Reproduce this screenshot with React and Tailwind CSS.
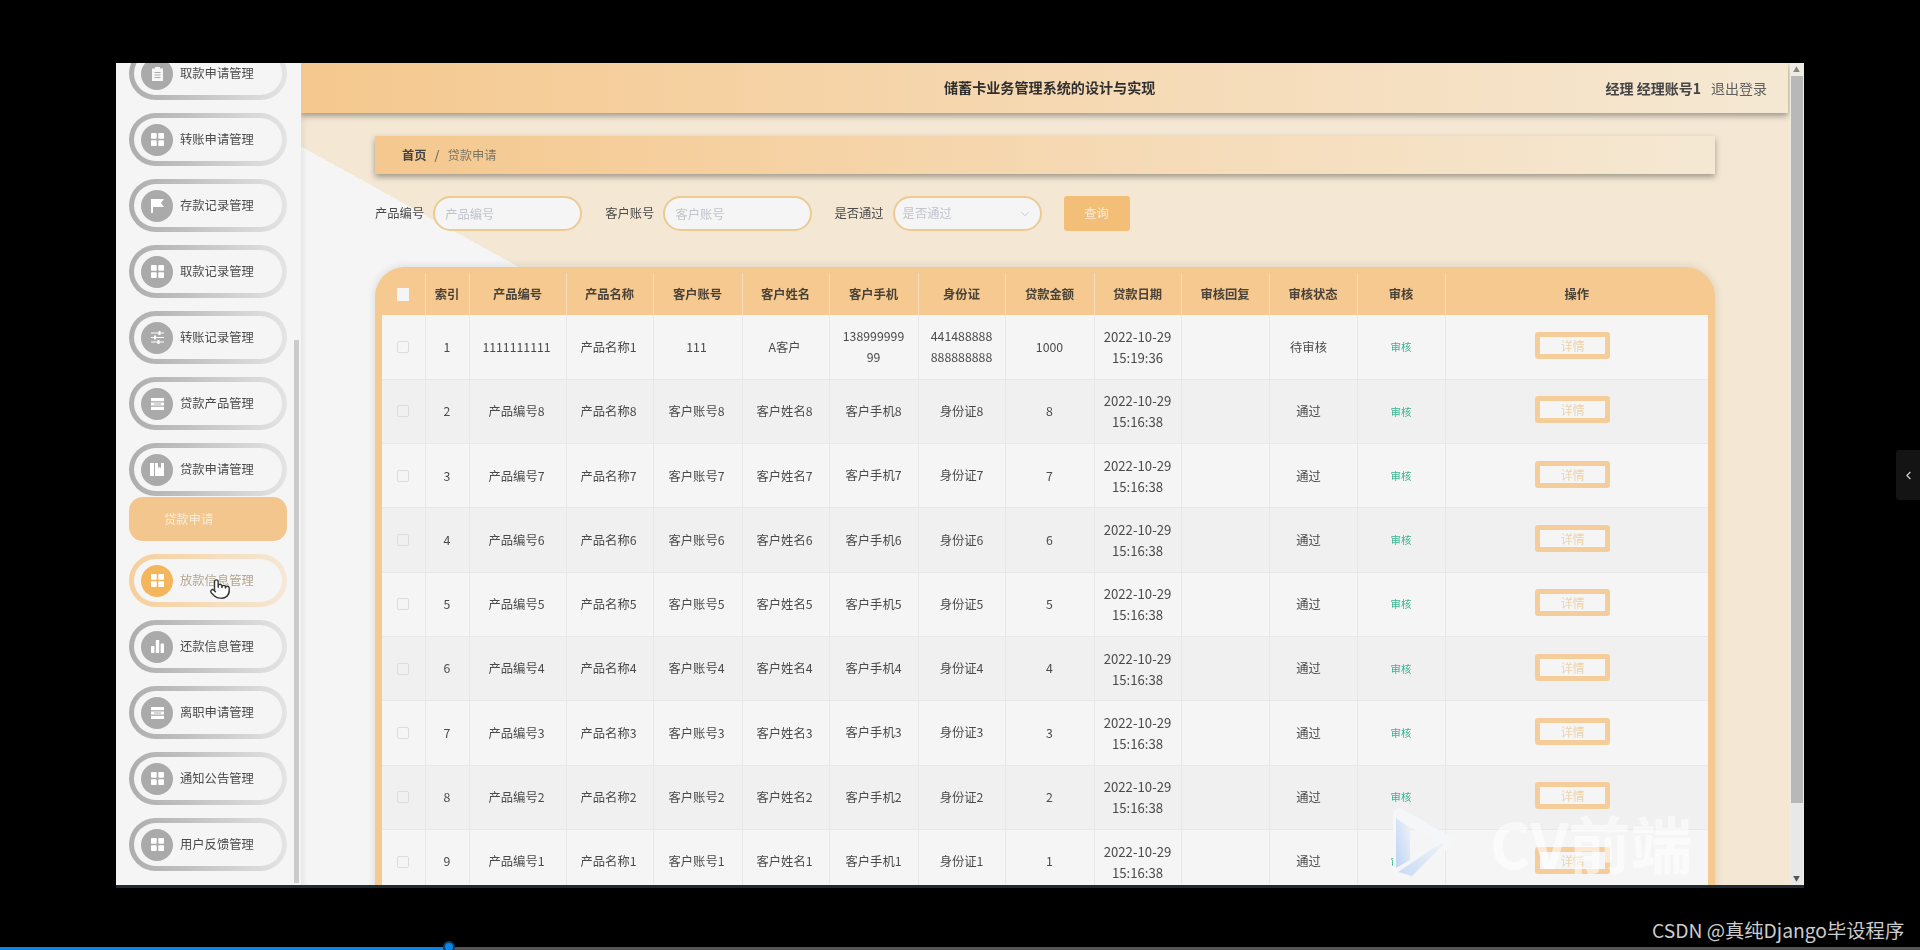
import { ChevronDown, ChevronLeft, Pointer } from "lucide-react";

const IconoGrid = () => (
  <svg width="13" height="13" viewBox="0 0 13 13" fill="#fff">
    <rect x="0" y="0" width="5.7" height="5.7" rx="0.8" />
    <rect x="7.3" y="0" width="5.7" height="5.7" rx="0.8" />
    <rect x="0" y="7.3" width="5.7" height="5.7" rx="0.8" />
    <rect x="7.3" y="7.3" width="5.7" height="5.7" rx="0.8" />
  </svg>
);

const IconoClip = () => (
  <svg width="13" height="14" viewBox="0 0 13 14" fill="#fff">
    <path d="M4 0h5v1.5h3V14H1V1.5h3z" opacity="0.9" />
    <rect x="3.5" y="5" width="6" height="1" fill="#aaa" />
    <rect x="3.5" y="7.5" width="6" height="1" fill="#aaa" />
    <rect x="3.5" y="10" width="6" height="1" fill="#aaa" />
  </svg>
);

const IconoFlag = () => (
  <svg width="13" height="14" viewBox="0 0 13 14" fill="#fff">
    <path d="M0 0h13l-3 4 3 4H2v6H0z" />
  </svg>
);

const IconoSliders = () => (
  <svg width="13" height="13" viewBox="0 0 13 13" fill="#fff">
    <rect x="0" y="1.5" width="13" height="1" />
    <rect x="0" y="6" width="13" height="1" />
    <rect x="0" y="10.5" width="13" height="1" />
    <rect x="7.5" y="0" width="2" height="4" />
    <rect x="3" y="4.5" width="2" height="4" />
    <rect x="6.5" y="9" width="2" height="4" />
  </svg>
);

const IconoFilas = () => (
  <svg width="13" height="12" viewBox="0 0 13 12" fill="#fff">
    <rect x="0" y="0" width="13" height="3.2" />
    <path d="M0 4.4h13v3.2H0zM3 5.4v1.2h7V5.4z" fillRule="evenodd" />
    <rect x="0" y="8.8" width="13" height="3.2" />
  </svg>
);

const IconoLibro = () => (
  <svg width="14" height="13" viewBox="0 0 14 13" fill="#fff">
    <rect x="0" y="0" width="4" height="13" />
    <path d="M5 0h3v5l1.5-1L11 5V0h3v13H5z" />
  </svg>
);

const IconoBarras = () => (
  <svg width="13" height="13" viewBox="0 0 13 13" fill="#fff">
    <rect x="0" y="6" width="3.4" height="7" rx="0.5" />
    <rect x="4.8" y="0" width="3.4" height="13" rx="0.5" />
    <rect x="9.6" y="3.5" width="3.4" height="9.5" rx="0.5" />
  </svg>
);

const menu = [
  { nombre: "取款申请管理", icono: <IconoClip /> },
  { nombre: "转账申请管理", icono: <IconoGrid /> },
  { nombre: "存款记录管理", icono: <IconoFlag /> },
  { nombre: "取款记录管理", icono: <IconoGrid /> },
  { nombre: "转账记录管理", icono: <IconoSliders /> },
  { nombre: "贷款产品管理", icono: <IconoFilas /> },
  { nombre: "贷款申请管理", icono: <IconoLibro />, sub: "贷款申请" },
  { nombre: "放款信息管理", icono: <IconoGrid />, activo: true },
  { nombre: "还款信息管理", icono: <IconoBarras /> },
  { nombre: "离职申请管理", icono: <IconoFilas /> },
  { nombre: "通知公告管理", icono: <IconoGrid /> },
  { nombre: "用户反馈管理", icono: <IconoGrid /> },
];

const columnas = [
  { titulo: "", ancho: "w-[43px]" },
  { titulo: "索引", ancho: "w-[44px]" },
  { titulo: "产品编号", ancho: "w-[97px]" },
  { titulo: "产品名称", ancho: "w-[87px]" },
  { titulo: "客户账号", ancho: "w-[89px]" },
  { titulo: "客户姓名", ancho: "w-[87px]" },
  { titulo: "客户手机", ancho: "w-[89px]" },
  { titulo: "身份证", ancho: "w-[87px]" },
  { titulo: "贷款金额", ancho: "w-[89px]" },
  { titulo: "贷款日期", ancho: "w-[87px]" },
  { titulo: "审核回复", ancho: "w-[88px]" },
  { titulo: "审核状态", ancho: "w-[88px]" },
  { titulo: "审核", ancho: "w-[88px]" },
  { titulo: "操作", ancho: "" },
];

const filas = [
  {
    codigo: "1111111111",
    nombre: "产品名称1",
    cuenta: "111",
    cliente: "A客户",
    movil: "13899999999",
    dni: "441488888888888888",
    monto: "1000",
    hora: "15:19:36",
    estado: "待审核",
  },
  ...[8, 7, 6, 5, 4, 3, 2, 1].map((n) => ({
    codigo: `产品编号${n}`,
    nombre: `产品名称${n}`,
    cuenta: `客户账号${n}`,
    cliente: `客户姓名${n}`,
    movil: `客户手机${n}`,
    dni: `身份证${n}`,
    monto: `${n}`,
    hora: "15:16:38",
    estado: "通过",
  })),
];

const ItemMenu = ({ item }) => (
  <div className="flex flex-col gap-px">
    <div
      className={`h-[53px] w-[158px] rounded-full p-[5px] bg-gradient-to-r ${
        item.activo ? "from-[#f6cf9c] to-[#f5e8d6]" : "from-[#adadad] to-[#e4e4e4]"
      }`}
    >
      <div className="flex h-full items-center gap-[7px] rounded-full bg-[#f5f5f5] pl-[7px]">
        <span
          className={`flex h-8 w-8 shrink-0 items-center justify-center rounded-full ${
            item.activo ? "bg-[#f3b65c]" : "bg-[#aaaaaa]"
          }`}
        >
          {item.icono}
        </span>
        <span className={`text-[12.3px] whitespace-nowrap ${item.activo ? "text-[#b5a690]" : "text-[#4a4a4a]"}`}>
          {item.nombre}
        </span>
      </div>
    </div>
    {item.sub && (
      <div className="flex h-11 w-[158px] items-center rounded-[14px] bg-[#f3c68d] pl-[35px] text-[12.3px] text-[#f8ecd9]">
        {item.sub}
      </div>
    )}
  </div>
);

const CampoTexto = ({ label, placeholder }) => (
  <div className="flex items-center gap-[9px]">
    <span className="text-[12.3px] text-[#4a4a4a] whitespace-nowrap">{label}</span>
    <input
      readOnly
      placeholder={placeholder}
      className="h-[35px] w-[149px] rounded-full border-2 border-[#ecca90] bg-[#f5f5f5] pl-[10px] text-[12.3px] outline-none placeholder:text-[#c0c4cc]"
    />
  </div>
);

const App = () => {
  return (
    <div className="relative h-[950px] w-[1920px] overflow-hidden bg-black font-['Noto_Sans_CJK_SC','Noto_Sans',sans-serif]">
      <div className="pl-[116px] pt-[63px]">
        <div className="flex h-[822px] w-[1688px] overflow-hidden bg-[#f5f5f5] blur-[0.4px]">
          {/* menu lateral */}
          <aside className="flex h-full w-[185px] shrink-0 overflow-hidden">
            <div className="-mt-[16px] flex w-[178px] shrink-0 flex-col gap-[13px] pl-[13px]">
              {menu.map((item) => (
                <ItemMenu key={item.nombre} item={item} />
              ))}
            </div>
            <div className="mt-[277px] h-[543px] w-[5px] shrink-0 bg-[#cbcbcb]" />
          </aside>

          {/* contenido */}
          <main className="h-full w-[1489px] shrink-0 overflow-hidden bg-[linear-gradient(29deg,#f5f5f5_646px,#f4e8d4_646px)] shadow-[inset_6px_0_6px_-4px_rgba(0,0,0,0.08)]">
            <header className="flex h-[50px] w-[1487px] items-center bg-gradient-to-r from-[#f5c88e] to-[#f5e8d3] shadow-[0_3px_6px_rgba(0,0,0,0.35)]">
              <span className="ml-[643px] text-[14.1px] font-bold text-[#2f2f2f] whitespace-nowrap">
                储蓄卡业务管理系统的设计与实现
              </span>
              <div className="ml-auto flex items-center gap-[10px] pr-[21px] text-[14px] whitespace-nowrap">
                <span className="font-bold text-[#444444]">经理 经理账号1</span>
                <span className="text-[#5f5f5f]">退出登录</span>
              </div>
            </header>

            <div className="ml-[74px] mt-[23px] flex h-[38px] w-[1340px] items-center gap-[8px] bg-gradient-to-r from-[#f5c88e] to-[#f5e8d3] pl-[27px] text-[12.3px] shadow-[0_3px_6px_rgba(0,0,0,0.35)]">
              <span className="font-bold text-[#444444]">首页</span>
              <span className="text-[#555555]">/</span>
              <span className="text-[#7d7666]">贷款申请</span>
            </div>

            <div className="ml-[74px] mt-[22px] flex h-[35px] items-center">
              <CampoTexto label="产品编号" placeholder="产品编号" />
              <div className="ml-[23px]">
                <CampoTexto label="客户账号" placeholder="客户账号" />
              </div>
              <div className="ml-[22px] flex items-center gap-[9px]">
                <span className="text-[12.3px] text-[#4a4a4a] whitespace-nowrap">是否通过</span>
                <div className="flex h-[35px] w-[149px] items-center justify-between rounded-full border-2 border-[#ecca90] bg-[#f5f5f5] pl-[8px] pr-[8px] text-[12.3px] text-[#c0c4cc]">
                  是否通过
                  <ChevronDown size={14} strokeWidth={1.5} />
                </div>
              </div>
              <button className="ml-[22px] h-[35px] w-[66px] rounded-[3px] bg-[#f3bf78] text-[12.3px] text-[#f8ecd9]">
                查询
              </button>
            </div>

            <div className="ml-[74px] mt-[36px] w-[1340px] rounded-t-[30px] bg-[#f5c98f] px-[7px] pt-[6px] shadow-[0_0_10px_rgba(0,0,0,0.12)]">
              <table className="w-full table-fixed border-collapse text-[12.3px] text-[#4a4a4a]">
                <colgroup>
                  {columnas.map((col, i) => (
                    <col key={i} className={col.ancho} />
                  ))}
                </colgroup>
                <thead>
                  <tr className="h-[42px]">
                    {columnas.map((col, i) => (
                      <th key={i} className="border-r border-[#f8dcb8] font-bold text-[#4a4238] last:border-r-0">
                        {i === 0 ? <span className="mx-auto block h-[13px] w-[12px] bg-[#f5f5f5]" /> : col.titulo}
                      </th>
                    ))}
                  </tr>
                </thead>
                <tbody>
                  {filas.map((fila, index) => (
                    <tr
                      key={index}
                      className={`h-[64.3px] border-b border-[#e8e8e8] text-center ${
                        index % 2 === 1 ? "bg-[#f0f0f0]" : "bg-[#f5f5f5]"
                      }`}
                    >
                      <td className="border-r border-[#e8e8e8]">
                        <span className="mx-auto block h-[12px] w-[12px] rounded-[2px] border border-[#dcdcdc]" />
                      </td>
                      <td className="border-r border-[#e8e8e8]">{index + 1}</td>
                      <td className="border-r border-[#e8e8e8] pr-[2px]">{fila.codigo}</td>
                      <td className="border-r border-[#e8e8e8] pr-[2px]">{fila.nombre}</td>
                      <td className="border-r border-[#e8e8e8] pr-[2px]">{fila.cuenta}</td>
                      <td className="border-r border-[#e8e8e8] pr-[2px]">{fila.cliente}</td>
                      <td className="border-r border-[#e8e8e8] px-[10px] leading-[21px] break-all">{fila.movil}</td>
                      <td className="border-r border-[#e8e8e8] px-[10px] leading-[21px] break-all">{fila.dni}</td>
                      <td className="border-r border-[#e8e8e8]">{fila.monto}</td>
                      <td className="border-r border-[#e8e8e8] text-[13.2px] leading-[21px]">
                        <div>2022-10-29</div>
                        <div>{fila.hora}</div>
                      </td>
                      <td className="border-r border-[#e8e8e8]" />
                      <td className="border-r border-[#e8e8e8] pr-[9px]">{fila.estado}</td>
                      <td className="border-r border-[#e8e8e8] text-[10.5px] text-[#3cb391]">审核</td>
                      <td>
                        <button className="mb-[3px] mr-2 h-[27px] w-[75px] rounded-[3px] border-[5px] border-[#f5cd9a] bg-[#f5f5f5] text-[12px] text-[#ecd2a8]">
                          详情
                        </button>
                      </td>
                    </tr>
                  ))}
                </tbody>
              </table>
            </div>
          </main>

          {/* barra de scroll */}
          <div className="flex h-full w-[14px] shrink-0 flex-col items-center bg-[#f0ece4] pr-px">
            <span className="flex h-[13px] items-center text-[7px] leading-none text-[#888888]">▲</span>
            <div className="h-[727px] w-[12px] bg-[#b8b8b8]" />
            <div className="w-[12px] flex-1 bg-[#e8e8e8]" />
            <span className="flex h-[13px] w-[12px] items-center justify-center bg-[#e8e8e8] text-[7px] leading-none text-[#555555]">▼</span>
          </div>
        </div>
        <div className="h-[3px] w-[1688px] bg-[#1d2a33]" />
      </div>

      {/* cursor */}
      <Pointer size={22} strokeWidth={1.5} fill="#ffffff" color="#333333" className="absolute left-[209px] top-[578px]" />

      {/* marca de agua */}
      <svg className="absolute left-[1390px] top-[806px]" width="66" height="74" viewBox="0 0 66 74">
        <defs>
          <linearGradient id="azul" x1="0" y1="1" x2="1" y2="0">
            <stop offset="0" stopColor="#bcd4f5" />
            <stop offset="1" stopColor="#f0f3f8" />
          </linearGradient>
        </defs>
        <path d="M9 8 L58 36 L9 66 Z" fill="none" stroke="#f4f6f8" strokeWidth="12" strokeLinejoin="round" />
        <path d="M6 12 L20 22 L20 54 L6 62 Z" fill="url(#azul)" />
        <path d="M8 66 L45 41 L56 36 L22 70 Z" fill="url(#azul)" opacity="0.8" />
      </svg>
      <span className="absolute left-[1490px] top-[802px] text-[62px] font-bold leading-[80px] text-white/55 whitespace-nowrap">
        CV前端
      </span>

      {/* pestaña lateral */}
      <div className="absolute left-[1896px] top-[450px] flex h-[50px] w-[24px] items-center justify-center rounded-l-[3px] bg-[#141414]">
        <ChevronLeft size={13} color="#d5d5d5" />
      </div>

      <span className="absolute left-[1652px] top-[916px] text-[19.3px] leading-[28px] text-[#cccccc] whitespace-nowrap">
        CSDN @真纯Django毕设程序
      </span>

      {/* barra de video */}
      <div className="absolute bottom-0 left-0 flex h-[3px] w-full">
        <div className="w-[449px] bg-[#0a84e6]" />
        <div className="flex-1 bg-[#555555]" />
      </div>
      <span className="absolute left-[443px] top-[941px] h-[12px] w-[12px] rounded-full border-[2px] border-[#0b3e6b] bg-[#0a84e6]" />
    </div>
  );
};

export default App;
